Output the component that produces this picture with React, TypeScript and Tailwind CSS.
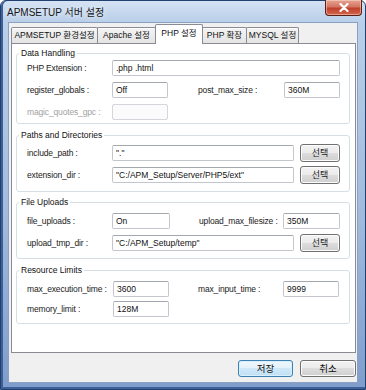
import React from "react";

const tabs = [
  { label: "APMSETUP 환경설정", w: "w-[87px]" },
  { label: "Apache 설정", w: "w-[59px]" },
  { label: "PHP 설정", w: "w-[48px]", active: true },
  { label: "PHP 확장", w: "w-[45px]" },
  { label: "MYSQL 설정", w: "w-[53px]" },
];

function Field({ value, w, disabled }: { value?: string; w: string; disabled?: boolean }) {
  return (
    <input
      readOnly
      disabled={disabled}
      defaultValue={value}
      className={`${w} h-[16px] px-[3px] rounded-[2px] border outline-none ${
        disabled
          ? "border-[#d3d6da] bg-[#fbfbfb]"
          : "border-[#c3c7cd] border-t-[#a3a8ae] bg-white text-[#111]"
      }`}
    />
  );
}

function PickButton() {
  return (
    <button className="ml-[6px] w-[40px] h-[18px] rounded-[3px] border border-[#707070] bg-[linear-gradient(#f3f3f3_0%,#ebebeb_50%,#dddddd_50%,#cfcfcf_100%)] text-[9px] leading-none text-[#1b1b1b] shadow-[inset_0_0_0_1px_#fcfcfc]">
      선택
    </button>
  );
}

function Group({ title, h, mt, children }: { title: string; h: string; mt: string; children: React.ReactNode }) {
  return (
    <fieldset className={`${h} ${mt} border border-[#d5dfe5] rounded-[3px]`}>
      <legend className="ml-[2px] px-[2px] leading-[11px] text-[#111]">{title}</legend>
      <div className="pl-[10px] flex flex-col">{children}</div>
    </fieldset>
  );
}

function Label({ text, w, ml, muted }: { text: string; w: string; ml?: string; muted?: boolean }) {
  return (
    <span className={`${w} ${ml ?? ""} shrink-0 tracking-[-0.15px] ${muted ? "text-[#a2a2a2]" : "text-[#1b1b1b]"}`}>
      {text}
    </span>
  );
}

export default function App() {
  return (
    <div className="w-[366px] h-[390px] bg-white font-['Liberation_Sans','Noto_Sans_CJK_KR',sans-serif] text-[8.5px] leading-[11px]">
      <div className="h-full flex flex-col rounded-t-[6px] border border-[#22406f] bg-[linear-gradient(180deg,#d5e3f3_0px,#bacfe9_20px,#a2bbdd_55%,#7f9dcc_100%)] shadow-[inset_2px_0_0_#3d5f97,inset_0_-2px_0_#3d5f97] px-[7px] pb-[6px]">
        {/* title bar */}
        <div className="h-[21px] flex items-start justify-between">
          <span className="-ml-px pt-[6px] text-[10px] leading-[11px] text-[#151515] [text-shadow:0_0_6px_#ffffff]">
            APMSETUP 서버 설정
          </span>
          <div className="-mr-[4px] -mt-px w-[37px] h-[16px] rounded-b-[4px] border border-t-0 border-[#5b1f17] bg-[linear-gradient(#e6a593_0%,#d47562_45%,#c0402c_55%,#d2654e_100%)] flex items-center justify-center shadow-[inset_0_0_0_1px_rgba(255,220,210,0.5)]">
            <svg width="10" height="9" viewBox="0 0 10 9">
              <path d="M1.5 1 L8.5 8 M8.5 1 L1.5 8" stroke="#fff" strokeWidth="2.2" strokeLinecap="round" />
            </svg>
          </div>
        </div>

        {/* client area */}
        <div className="flex-1 flex flex-col bg-[#f0f0f0] border border-[#8aa1c1] pl-[2px] pr-[1px] pt-[1px]">
          <div className="h-[19px] flex items-end">
            {tabs.map((t, i) =>
              t.active ? (
                <div
                  key={t.label}
                  className={`${t.w} ${i > 0 ? "-ml-px" : ""} relative z-10 h-[20px] -mb-px border border-b-0 border-[#898c95] rounded-t-[2px] bg-white flex items-center justify-center pb-[2px] text-[#111]`}
                >
                  {t.label}
                </div>
              ) : (
                <div
                  key={t.label}
                  className={`${t.w} ${i > 0 ? "-ml-px" : ""} h-[16px] border border-b-0 border-[#898c95] rounded-t-[2px] bg-[linear-gradient(#f4f4f4,#e4e4e4)] shadow-[inset_0_1px_0_#ffffff] flex items-center justify-center text-[#111]`}
                >
                  {t.label}
                </div>
              )
            )}
          </div>

          {/* tab panel */}
          <div className="h-[310px] border border-[#898c95] bg-white pl-[4px] pr-[5px] flex flex-col">
            <Group title="Data Handling" h="h-[76px]" mt="mt-[4px]">
              <div className="h-[18px] flex items-center">
                <Label text="PHP Extension :" w="w-[85px]" />
                <Field value=".php .html" w="w-[228px]" />
              </div>
              <div className="mt-[4px] h-[18px] flex items-center">
                <Label text="register_globals :" w="w-[85px]" />
                <Field value="Off" w="w-[56px]" />
                <Label text="post_max_size :" w="w-[86px]" ml="ml-[30px]" />
                <Field value="360M" w="w-[56px]" />
              </div>
              <div className="mt-[4px] h-[18px] flex items-center">
                <Label text="magic_quotes_gpc :" w="w-[85px]" muted />
                <Field w="w-[56px]" disabled />
              </div>
            </Group>

            <Group title="Paths and Directories" h="h-[62px]" mt="mt-[6px]">
              <div className="mt-[3px] h-[18px] flex items-center">
                <Label text="include_path :" w="w-[85px]" />
                <Field value={'"."'} w="w-[182px]" />
                <PickButton />
              </div>
              <div className="mt-[4px] h-[18px] flex items-center">
                <Label text="extension_dir :" w="w-[85px]" />
                <Field value={'"C:/APM_Setup/Server/PHP5/ext"'} w="w-[182px]" />
                <PickButton />
              </div>
            </Group>

            <Group title="File Uploads" h="h-[62px]" mt="mt-[5px]">
              <div className="mt-[4px] h-[18px] flex items-center">
                <Label text="file_uploads :" w="w-[85px]" />
                <Field value="On" w="w-[58px]" />
                <Label text="upload_max_filesize :" w="w-[84px]" ml="ml-[29px]" />
                <Field value="350M" w="w-[57px]" />
              </div>
              <div className="mt-[4px] h-[18px] flex items-center">
                <Label text="upload_tmp_dir :" w="w-[85px]" />
                <Field value={'"C:/APM_Setup/temp"'} w="w-[182px]" />
                <PickButton />
              </div>
            </Group>

            <Group title="Resource Limits" h="h-[59px]" mt="mt-[6px]">
              <div className="mt-[4px] h-[18px] flex items-center">
                <Label text="max_execution_time :" w="w-[86px]" />
                <Field value="3600" w="w-[56px]" />
                <Label text="max_input_time :" w="w-[85px]" ml="ml-[29px]" />
                <Field value="9999" w="w-[56px]" />
              </div>
              <div className="mt-[2px] h-[18px] flex items-center">
                <Label text="memory_limit :" w="w-[86px]" />
                <Field value="128M" w="w-[56px]" />
              </div>
            </Group>
          </div>

          {/* dialog buttons */}
          <div className="mt-[7px] flex justify-end gap-[7px]">
            <button className="w-[55px] h-[17px] rounded-[3px] border border-[#3c7fb1] bg-[linear-gradient(#f0f8fd_0%,#e2f1fb_50%,#cfe8f8_50%,#c0e0f5_100%)] shadow-[inset_0_0_0_1px_#d8f0fd] text-[9.5px] leading-none text-[#111]">
              저장
            </button>
            <button className="w-[56px] h-[17px] rounded-[3px] border border-[#707070] bg-[linear-gradient(#f3f3f3_0%,#ebebeb_50%,#dddddd_50%,#cfcfcf_100%)] shadow-[inset_0_0_0_1px_#fcfcfc] text-[9.5px] leading-none text-[#111]">
              취소
            </button>
          </div>
        </div>
      </div>
    </div>
  );
}
